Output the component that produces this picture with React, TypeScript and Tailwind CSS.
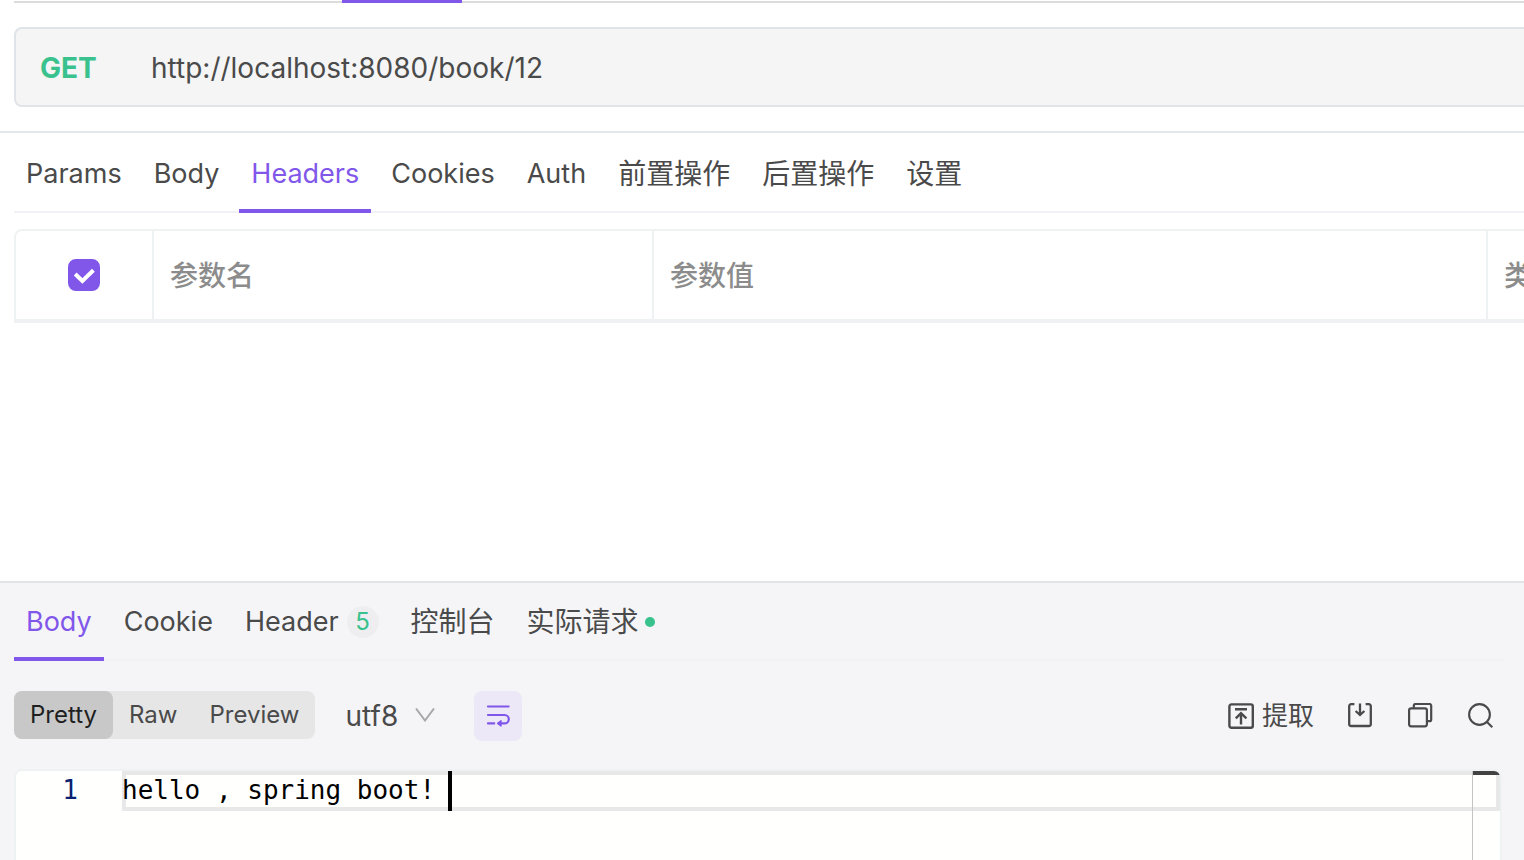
import { useState } from "react";

type Tab = {
  key: string;
  label: string;
  count?: number;
  dot?: boolean;
};

const requestTabs: Tab[] = [
  { key: "params", label: "Params" },
  { key: "body", label: "Body" },
  { key: "headers", label: "Headers" },
  { key: "cookies", label: "Cookies" },
  { key: "auth", label: "Auth" },
  { key: "pre", label: "前置操作" },
  { key: "post", label: "后置操作" },
  { key: "settings", label: "设置" },
];

const responseTabs: Tab[] = [
  { key: "body", label: "Body" },
  { key: "cookie", label: "Cookie" },
  { key: "header", label: "Header", count: 5 },
  { key: "console", label: "控制台" },
  { key: "actual", label: "实际请求", dot: true },
];

const viewModes = ["Pretty", "Raw", "Preview"];

// Inter runs a little wide next to the Chinese labels
const isLatin = (text: string) => /^[A-Za-z]+$/.test(text);

function TabBar({
  tabs,
  active,
  onChange,
}: {
  tabs: Tab[];
  active: string;
  onChange: (key: string) => void;
}) {
  return (
    <div role="tablist" className="flex gap-2 h-20 shadow-[inset_0_-2px_0_#f0f2f5]">
      {tabs.map((tab) => (
        <button
          key={tab.key}
          type="button"
          role="tab"
          aria-selected={active === tab.key}
          onClick={() => onChange(tab.key)}
          className={`flex items-center px-3 pt-1.5 border-b-4 whitespace-nowrap ${
            isLatin(tab.label) ? "text-[27px]" : "text-[28px]"
          } ${
            active === tab.key
              ? "border-[#8157ea] text-[#8157ea]"
              : "border-transparent text-[#4a4a4a]"
          }`}
        >
          {tab.label}
          {tab.count !== undefined && (
            <span className="ml-2 size-8 rounded-full bg-[#eeeef0] text-2xl leading-8 text-[#39c28d]">
              {tab.count}
            </span>
          )}
          {tab.dot && <span className="ml-1.5 size-2.5 rounded-full bg-[#39c28d]" />}
        </button>
      ))}
    </div>
  );
}

function WrapIcon() {
  return (
    <svg
      viewBox="0 0 24 24"
      className="size-6"
      fill="none"
      stroke="currentColor"
      strokeWidth="2.2"
      strokeLinecap="round"
      aria-hidden="true"
    >
      <path d="M2 2.5h20.6M2 11h16.6a4.2 4.2 0 0 1 0 8.4H14.5M2 19.4h6.2" />
      <path d="M11.6 19.4l3.4-2.6v5.2z" fill="currentColor" strokeWidth="1.4" strokeLinejoin="round" />
    </svg>
  );
}

function ExtractIcon() {
  return (
    <svg viewBox="0 0 26 26" className="size-[26px]" fill="none" stroke="currentColor" strokeWidth="2.4" aria-hidden="true">
      <rect x="1.4" y="1.4" width="23.4" height="23.4" rx="2" />
      <path d="M7 6.3h12M13 21.6V10.5M7.8 15.4L13 10.2l5.4 5.2" />
    </svg>
  );
}

function DownloadIcon() {
  return (
    <svg viewBox="0 0 26 26" className="size-[26px]" fill="none" stroke="currentColor" strokeWidth="2.3" aria-hidden="true">
      <path d="M6.4 1.2H3.2a2 2 0 0 0-2 2V21a2 2 0 0 0 2 2h17.6a2 2 0 0 0 2-2V3.2a2 2 0 0 0-2-2h-3.2" />
      <path d="M12 0.4v11.4M7.6 8l4.4 4 4.4-4" />
    </svg>
  );
}

function CopyIcon() {
  return (
    <svg viewBox="0 0 26 26" className="size-[26px]" fill="none" stroke="currentColor" strokeWidth="2.2" aria-hidden="true">
      <rect x="1.1" y="5.3" width="17.8" height="18" rx="2" />
      <path d="M5.8 5.3V2.6a1.8 1.8 0 0 1 1.8-1.6h13.8a1.8 1.8 0 0 1 1.8 1.8v13.6a1.8 1.8 0 0 1-1.8 1.8h-2.4" />
    </svg>
  );
}

function SearchIcon() {
  return (
    <svg viewBox="0 0 26 26" className="size-[26px]" fill="none" stroke="currentColor" strokeWidth="2.1" aria-hidden="true">
      <circle cx="11.5" cy="11.5" r="10.4" />
      <path d="M18.7 18.7l5.6 5.6" />
    </svg>
  );
}

export default function App() {
  const [url, setUrl] = useState("http://localhost:8080/book/12");
  const [requestTab, setRequestTab] = useState("headers");
  const [responseTab, setResponseTab] = useState("body");
  const [allChecked, setAllChecked] = useState(true);
  const [mode, setMode] = useState("Pretty");

  return (
    <main className="min-h-screen flex flex-col overflow-hidden bg-white font-['Inter','Noto_Sans_CJK_SC',sans-serif] text-[28px] leading-10 text-[#4a4a4a]">
      {/* page tabs, lower edge */}
      <div className="ml-3.5 h-[3px] shadow-[inset_0_-2px_0_#dcdcdc]">
        <div className="ml-[328px] w-[120px] h-[3px] bg-[#8157ea]" />
      </div>

      {/* request line */}
      <div className="border-b-2 border-[#e3e6ea] pt-6 pb-6 pl-3.5">
        <div className="flex items-center h-20 rounded-l-lg border-2 border-r-0 border-[#e0e4e8] bg-[#f5f5f5] pl-6 pt-0.5">
          <select
            aria-label="Method"
            className="w-[111px] appearance-none bg-transparent font-bold text-[#39c28d] outline-none"
          >
            <option>GET</option>
            <option>POST</option>
          </select>
          <input
            aria-label="URL"
            value={url}
            onChange={(e) => setUrl(e.target.value)}
            className="flex-1 min-w-0 bg-transparent outline-none"
          />
        </div>
      </div>

      {/* request */}
      <section className="flex-1 pl-3.5">
        <TabBar tabs={requestTabs} active={requestTab} onChange={setRequestTab} />

        <div className="mt-4 overflow-hidden rounded-tl-lg border-2 border-r-0 border-b-4 border-[#eef2f3]">
          <table className="w-full table-fixed border-separate border-spacing-0">
            <thead>
              <tr className="h-[88px] text-left text-[#8c8c8c] whitespace-nowrap">
                <th className="w-[138px] border-r-2 border-[#eef2f3]">
                  <label className="relative mx-auto block size-8">
                    <input
                      type="checkbox"
                      aria-label="Select all"
                      checked={allChecked}
                      onChange={(e) => setAllChecked(e.target.checked)}
                      className="peer block size-8 appearance-none rounded-lg border-2 border-[#8157ea] checked:bg-[#8157ea]"
                    />
                    <svg
                      viewBox="0 0 32 32"
                      className="pointer-events-none absolute inset-0 size-8 opacity-0 peer-checked:opacity-100"
                      fill="none"
                      stroke="white"
                      strokeWidth="4"
                      aria-hidden="true"
                    >
                      <path d="M7.2 15l7.2 7L25.4 11.2" />
                    </svg>
                  </label>
                </th>
                <th className="w-[500px] border-r-2 border-[#eef2f3] px-4 pt-0.5 font-medium">参数名</th>
                <th className="border-r-2 border-[#eef2f3] px-4 pt-0.5 font-medium">参数值</th>
                <th className="w-9 pl-4 pt-0.5 font-medium">类型</th>
              </tr>
            </thead>
          </table>
        </div>
      </section>

      {/* response */}
      <section className="border-t-2 border-[#e0e4e8] bg-[#f5f5f8] pl-3.5 pr-5">
        <div className="h-[78px] flex items-end">
          <div className="flex-1">
            <TabBar tabs={responseTabs} active={responseTab} onChange={setResponseTab} />
          </div>
        </div>

        <div className="flex items-center pt-[30px] pb-7">
          <div className="flex h-12 self-start rounded-lg bg-[#e6e6e6]">
            {viewModes.map((m) => (
              <button
                key={m}
                type="button"
                aria-pressed={mode === m}
                onClick={() => setMode(m)}
                className={`rounded-lg px-4 text-2xl ${
                  mode === m ? "bg-[#c8c8c8] text-[#1f1f1f]" : ""
                }`}
              >
                {m}
              </button>
            ))}
          </div>

          <div className="relative ml-[30px]">
            <select aria-label="Encoding" className="block w-[90px] appearance-none bg-transparent outline-none">
              <option>utf8</option>
              <option>gbk</option>
            </select>
            <svg
              viewBox="0 0 20 14"
              className="pointer-events-none absolute right-0 top-3 h-3.5 w-5"
              fill="none"
              stroke="#a8a8a8"
              strokeWidth="2"
              aria-hidden="true"
            >
              <path d="M1 0.5l9 12 9-12" />
            </svg>
          </div>

          <button
            type="button"
            aria-label="Word wrap"
            className="ml-[39px] flex h-[50px] w-12 items-center justify-center rounded-lg bg-[#ece8f7] text-[#8157ea]"
          >
            <WrapIcon />
          </button>

          <div className="ml-auto mr-2.5 flex items-center gap-[34px]">
            <button type="button" className="flex items-center gap-2 text-[26px]">
              <ExtractIcon />
              提取
            </button>
            <button type="button" aria-label="Download">
              <DownloadIcon />
            </button>
            <button type="button" aria-label="Copy">
              <CopyIcon />
            </button>
            <button type="button" aria-label="Search">
              <SearchIcon />
            </button>
          </div>
        </div>

        {/* response body */}
        <div className="relative mr-0.5 flex overflow-hidden rounded-t-lg border-2 border-b-0 border-[#eef2f3] bg-[#fffffe] pb-[49px] font-['DejaVu_Sans_Mono',monospace] text-[26px] text-black">
          <span className="w-[106px] pr-[44px] text-right leading-[38px] text-[#0b216f]">1</span>
          <div className="flex flex-1 h-10 border-4 border-l-0 border-[#e8e8e8] leading-[30px] shadow-[inset_4px_0_0_#e8e8e8]">
            <code className="whitespace-pre font-['DejaVu_Sans_Mono',monospace]">hello , spring boot!</code>
          </div>
          <span className="absolute left-[432px] top-0 h-10 w-1 bg-black" />
          <div className="absolute right-0 inset-y-0 w-7 border-l border-[#c4c4c4]">
            <div className="h-1 bg-[#424242]" />
          </div>
        </div>
      </section>
    </main>
  );
}
